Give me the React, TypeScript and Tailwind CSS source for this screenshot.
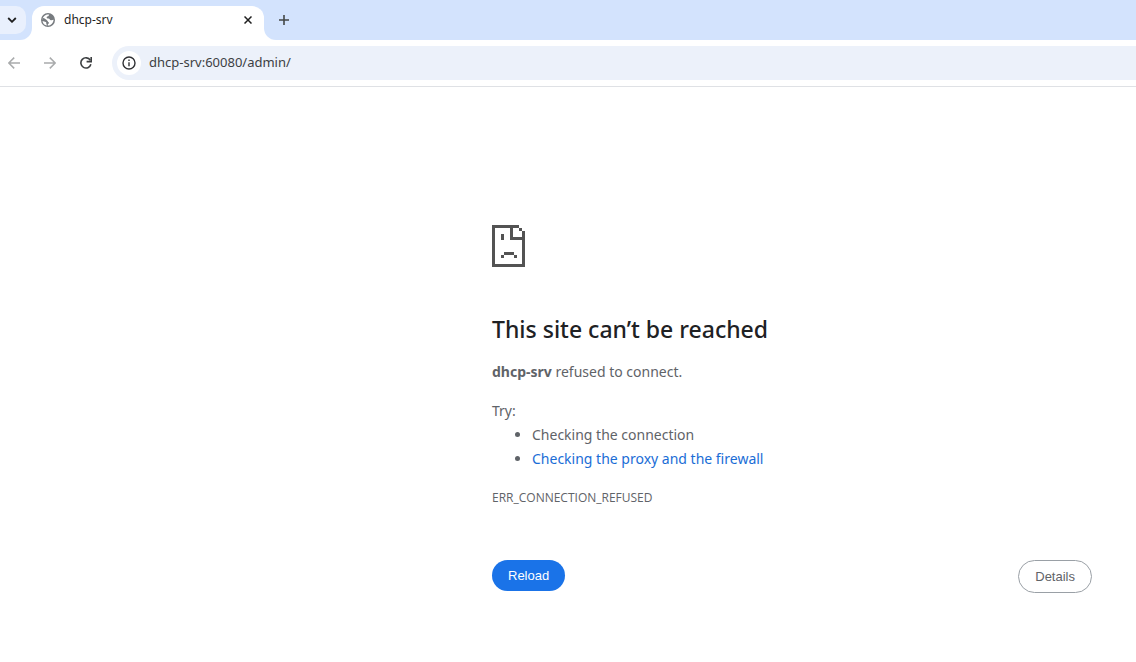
import type { FormEvent } from "react";

const sadPageCells: [number, number, number, number][] = [
  [0, 0, 27, 3],
  [0, 3, 3, 39],
  [3, 39, 30, 3],
  [30, 6, 3, 33],
  [27, 3, 3, 3],
  [18, 3, 3, 12],
  [21, 12, 9, 3],
  [9, 9, 3, 6],
  [12, 27, 10, 3],
  [9, 30, 3, 3],
  [22, 30, 3, 3],
];

const SadPageIcon = () => (
  <svg width="33" height="42" viewBox="0 0 33 42" fill="#535353" shapeRendering="crispEdges" aria-hidden="true">
    {sadPageCells.map(([x, y, w, h]) => (
      <rect key={`${x}-${y}`} x={x} y={y} width={w} height={h} />
    ))}
  </svg>
);

const GlobeIcon = () => (
  <svg width="14" height="14" viewBox="0 0 14 14" aria-hidden="true">
    <circle cx="7" cy="7" r="7" fill="#777b7f" />
    <path
      d="M8.3 1.500C7.600 2 8 2.900 7 3.200c-1 .2-1.500.6-1.300 1.500.2.900 1.700.600 2.500 1 .900.400.700 1.500 1.700 1.600 1 .1 1.700-.3 2.700-.5-.1 2.200-1.300 4.200-3.300 5.200-1 .5-2 .6-2.600.5 0-1 .3-1.600 1-2 .6-.500.2-1.300-.5-1.600C6 8.500 5.500 7.600 4.600 7.200 3.600 6.800 2.300 6.800 1.400 6.800 1.500 3.700 4.500.8 8.300 1.500z"
      fill="white"
    />
    <path d="M1.600 4.800 3.600 5.400 5.400 6.800 7 8.400 5.800 9.600 3.500 9 1.200 8z" fill="#777b7f" />
    <path d="M1.500 7.900c1 .5 2.300.6 3.300 1 .6.400.5 1.200.5 1.800.1.600.6.900.6 1.800C3.600 12.200 1.800 10.500 1.500 7.900z" fill="white" />
  </svg>
);

const TabStrip = () => (
  <div className="flex h-10 bg-[#d3e3fd]">
    <div className="w-8 bg-white">
      <div className="flex h-full items-center rounded-br-xl bg-[#d3e3fd]">
        <button
          aria-label="Search tabs"
          className="flex h-7 w-[26px] items-center justify-center rounded-r-[10px] bg-[#e9f0fd] pr-0.5"
        >
          <svg width="10" height="6" viewBox="0 0 10 6" fill="none" stroke="#1f1f1f" strokeWidth="1.8">
            <path d="M1.200 1 5 4.800 8.800 1" />
          </svg>
        </button>
      </div>
    </div>
    <div className="flex w-[232px] items-end">
      <div className="flex h-[34px] w-full items-center rounded-t-xl bg-white pr-2 pb-1.5 pl-[9px]">
        <GlobeIcon />
        <span className="ml-[9px] flex-1 text-xs text-[#1f1f1f]">dhcp-srv</span>
        <button aria-label="Close tab" className="flex size-4 items-center justify-center">
          <svg width="8" height="8" viewBox="0 0 8 8" stroke="#1f1f1f" strokeWidth="1.5">
            <path d="M.5.5l7 7M7.500.5l-7 7" />
          </svg>
        </button>
      </div>
    </div>
    <div className="flex-1 bg-white">
      <div className="flex h-full items-center rounded-bl-xl bg-[#d3e3fd] pl-3">
        <button aria-label="New tab" className="flex size-4 items-center justify-center">
          <svg width="10" height="10" viewBox="0 0 10 10" stroke="#444746" strokeWidth="1.600">
            <path d="M5 0v10M0 5h10" />
          </svg>
        </button>
      </div>
    </div>
  </div>
);

const Toolbar = () => (
  <div className="flex h-[47px] items-center border-b border-[#dfe1e5] bg-white">
    <div className="flex items-center gap-5 pl-1.5">
      <button aria-label="Back" disabled className="flex size-4 items-center justify-center">
        <svg width="12" height="12" viewBox="0 0 12 12" fill="none" stroke="#a9abac" strokeWidth="1.500">
          <path d="M12 6H1M6.200.6.800 6l5.400 5.400" />
        </svg>
      </button>
      <button aria-label="Forward" disabled className="flex size-4 items-center justify-center">
        <svg width="12" height="12" viewBox="0 0 12 12" fill="none" stroke="#a9abac" strokeWidth="1.500">
          <path d="M0 6h11M5.800.6 11.200 6l-5.400 5.400" />
        </svg>
      </button>
      <button aria-label="Reload page" className="flex size-4 items-center justify-center">
        <svg width="12" height="12" viewBox="0 0 12 12" fill="none" stroke="#3c3f41" strokeWidth="1.600">
          <path d="M10.900 7.300A5.100 5.100 0 1 1 10.300 3.200" />
          <path d="M11.200 0v4.600H6.600" />
        </svg>
      </button>
    </div>
    <form
      className="ml-[18px] flex h-[34px] flex-1 items-center rounded-l-full bg-[#ecf1fa] pl-[5px]"
      onSubmit={(e: FormEvent) => e.preventDefault()}
    >
      <button
        type="button"
        aria-label="View site information"
        className="flex size-6 items-center justify-center rounded-full bg-white"
      >
        <svg width="14" height="14" viewBox="0 0 14 14" fill="none" stroke="#303134" strokeWidth="1.400">
          <circle cx="7" cy="7" r="6" />
          <path d="M7 6.300v4M7 3.500v1.400" />
        </svg>
      </button>
      <input
        aria-label="Address"
        defaultValue="dhcp-srv:60080/admin/"
        className="ml-2 min-w-0 flex-1 bg-transparent text-[13px] text-[#3c4043] outline-none"
      />
    </form>
  </div>
);

const ErrorPage = () => (
  <main className="flex justify-end px-11 pt-[138px] text-sm leading-6 text-[#5f6368]">
    <div className="w-full max-w-[600px]">
      <SadPageIcon />
      <h1 className="mt-12 text-[23px] leading-7 font-medium text-[#202124]">This site can’t be reached</h1>
      <p className="mt-[17px]">
        <strong>dhcp-srv</strong> refused to connect.
      </p>
      <p className="mt-[15px]">Try:</p>
      <ul className="list-disc pl-10">
        <li>Checking the connection</li>
        <li>
          <a href="#buttons" className="text-[#1a6dd6]">
            Checking the proxy and the firewall
          </a>
        </li>
      </ul>
      <p className="mt-[15px] font-['Open_Sans',sans-serif] text-xs leading-6">ERR_CONNECTION_REFUSED</p>
      <div
        id="buttons"
        className="mt-[50px] flex items-start justify-between font-['Liberation_Sans',sans-serif] text-[13px]"
      >
        <button className="h-[31px] rounded-full bg-[#1a73e8] px-4 text-white">Reload</button>
        <button className="h-[33px] rounded-full border border-[#9aa0a6] px-4 text-[#5f6368]">Details</button>
      </div>
    </div>
  </main>
);

export default function App() {
  return (
    <div className="min-h-screen bg-white font-['Noto_Sans','Open_Sans',sans-serif]">
      <TabStrip />
      <Toolbar />
      <ErrorPage />
    </div>
  );
}
